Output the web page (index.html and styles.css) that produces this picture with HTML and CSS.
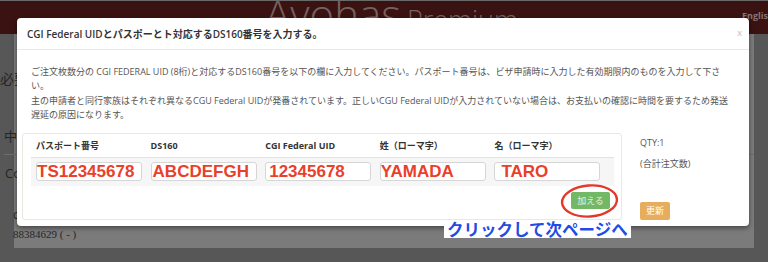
FILE: index.html
```html
<!DOCTYPE html>
<html lang="ja">
<head>
<meta charset="utf-8">
<title>CGI Federal UID 入力</title>
<link rel="stylesheet" href="styles.css">
</head>
<body>
<header class="topbar">
  <div class="brand"><span class="brand-main">Avohas</span> <span class="brand-sub">Premium</span></div>
  <span class="lang">English</span>
</header>
<main class="page">
  <div class="bg-heading">必要</div>
  <div class="bg-row">中</div>
  <div class="bg-row2">Co</div>
  <div class="bg-c">c</div>
  <div class="bg-num">88384629 ( - )</div>
</main>

<div class="modal">
  <div class="modal-header">
    <h4 class="modal-title">CGI Federal UIDとパスポーとト対応するDS160番号を入力する。</h4>
    <span class="close">x</span>
  </div>
  <div class="modal-body">
    <div class="intro">
      <p>ご注文枚数分の CGI FEDERAL UID (8桁)と対応するDS160番号を以下の欄に入力してください。パスポート番号は、ビザ申請時に入力した有効期限内のものを入力して下さい。</p>
      <p>主の申請者と同行家族はそれぞれ異なるCGU Federal UIDが発番されています。正しいCGU Federal UIDが入力されていない場合は、お支払いの確認に時間を要するため発送遅延の原因になります。</p>
    </div>
    <div class="content">
      <div class="panel">
        <div class="cols labels">
          <div>パスポート番号</div>
          <div>DS160</div>
          <div>CGI Federal UID</div>
          <div>姓（ローマ字）</div>
          <div>名（ローマ字）</div>
        </div>
        <div class="cols stripe">
          <div class="field f1">TS12345678</div>
          <div class="field f2">ABCDEFGH</div>
          <div class="field f3">12345678</div>
          <div class="field f4">YAMADA</div>
          <div class="field f5">TARO</div>
        </div>
        <div class="actions">
          <button class="btn btn-add">加える</button>
        </div>
      </div>
      <div class="side">
        <div class="qty">QTY:1</div>
        <div class="total">(合計注文数)</div>
        <button class="btn btn-update">更新</button>
      </div>
    </div>
  </div>
</div>

<svg class="ring" width="64" height="40" viewBox="0 0 64 40">
  <ellipse cx="31.5" cy="19" rx="27.5" ry="15.5" fill="none" stroke="#e3392a" stroke-width="2.4" transform="rotate(-4 31.5 19)"/>
</svg>
<div class="callout">クリックして次ページへ</div>
</body>
</html>
```

FILE: styles.css
```css
html, body {
  margin: 0;
  padding: 0;
}
body {
  width: 768px;
  height: 262px;
  overflow: hidden;
  background: #575757;
  font-family: "Open Sans", "Noto Sans CJK JP", sans-serif;
  position: relative;
}
p { margin: 0; }

.topbar {
  height: 33px;
  border-top: 1px solid #6a6a6a;
  background: #3b1212;
  display: flex;
  overflow: hidden;
  white-space: nowrap;
}
.brand {
  margin-left: 265px;
  line-height: 26px;
  color: #76615f;
  font-family: "Open Sans", sans-serif;
  font-weight: 300;
}
.brand-main { font-size: 42px; }
.brand-sub { font-size: 27px; margin-left: 2px; }
.lang {
  margin-left: auto;
  margin-right: -6px;
  margin-top: 8px;
  font-size: 9px;
  font-weight: 700;
  color: #857474;
  font-family: "Open Sans", sans-serif;
}

.page {
  margin: 0 14px;
  height: 214px;
  background: #7b7b7b;
  color: #262626;
  overflow: visible;
}
.bg-heading {
  padding-top: 36px;
  margin-left: -14px;
  font-size: 14px;
  line-height: 16px;
  font-family: "Noto Sans CJK JP", sans-serif;
}
.bg-row {
  margin: 42px 0 0 -10px;
  padding-bottom: 10px;
  font-size: 13px;
  line-height: 16px;
  border-bottom: 1px solid #6d6d6d;
  font-family: "Noto Sans CJK JP", sans-serif;
}
.bg-row2 {
  margin: 10px 0 0 -9px;
  font-size: 13px;
  line-height: 16px;
}
.bg-c {
  margin: 27px 0 0 -1px;
  font-size: 12px;
  line-height: 14px;
}
.bg-num {
  margin: 5px 0 0 -1px;
  font-family: "Liberation Serif", serif;
  font-size: 11px;
  line-height: 14px;
}

.modal {
  position: absolute;
  left: 17px;
  top: 18px;
  width: 732px;
  height: 208px;
  background: #fff;
  border-radius: 4px;
  box-shadow: 0 2px 5px rgba(0,0,0,.45);
}
.modal-header {
  height: 31px;
  border-bottom: 1px solid #e8e8e8;
  display: flex;
  align-items: center;
  justify-content: space-between;
  padding: 0 7px 0 10px;
}
.modal-title {
  margin: 0;
  font-size: 10px;
  font-weight: 600;
  color: #333;
}
.close {
  font-size: 9px;
  color: #bdbdbd;
  margin-top: -2px;
}
.modal-body {
  padding: 15px 5px 0 5px;
}
.intro {
  padding: 0 11px 0 9px;
  font-size: 9px;
  line-height: 14.4px;
  color: #555;
}
.content {
  display: flex;
  margin-top: 10px;
}
.panel {
  width: 600px;
  box-sizing: border-box;
  border: 1px solid #e9e9e1;
  border-radius: 3px;
  padding: 4px 7px 4px 8px;
}
.cols {
  display: grid;
  grid-template-columns: repeat(5, 114.6px);
  padding-left: 5px;
}
.labels {
  font-size: 9px;
  font-weight: 700;
  line-height: 16px;
  color: #333;
  margin-bottom: 3px;
}
.stripe {
  border-top: 1px solid #e2e2e2;
  background: #f6f6f6;
  padding-top: 4px;
  padding-bottom: 5px;
}
.field {
  width: 106px;
  height: 19px;
  box-sizing: border-box;
  border: 1px solid #d6d6d6;
  border-radius: 3px;
  background: #fff;
  font-family: "Liberation Sans", Arial, sans-serif;
  font-weight: 700;
  font-size: 17px;
  line-height: 17px;
  color: #ea3f2a;
  white-space: nowrap;
}
.f1 { padding-left: 0; }
.f2 { padding-left: 1px; }
.f3 { padding-left: 3px; }
.f4 { padding-left: 0; }
.f5 { padding-left: 6px; }

.actions {
  display: flex;
  justify-content: flex-end;
  margin-top: 6px;
  padding-right: 4px;
}
.btn {
  border: 0;
  border-radius: 2px;
  font-family: "Noto Sans CJK JP", sans-serif;
  font-size: 9px;
  padding: 0;
  color: #fff;
}
.btn-add {
  width: 39px;
  height: 17px;
  background: #72b865;
  color: #e6f2e2;
}
.side {
  margin-left: 18px;
  font-size: 9px;
  line-height: 14px;
  color: #555;
  display: flex;
  flex-direction: column;
  align-items: flex-start;
}
.qty { margin-top: 3px; }
.total { margin-top: 7px; }
.btn-update {
  margin-top: 31px;
  width: 30px;
  height: 18px;
  background: #e8ad5c;
}

.ring {
  position: absolute;
  left: 558px;
  top: 182px;
}
.callout {
  position: absolute;
  left: 444px;
  top: 221px;
  width: 187px;
  height: 17px;
  box-sizing: border-box;
  padding-left: 3px;
  background: #fff;
  color: #1f4be6;
  font-family: "Noto Sans CJK JP", sans-serif;
  font-weight: 700;
  font-size: 16.5px;
  line-height: 17px;
  white-space: nowrap;
  overflow: visible;
}
```
